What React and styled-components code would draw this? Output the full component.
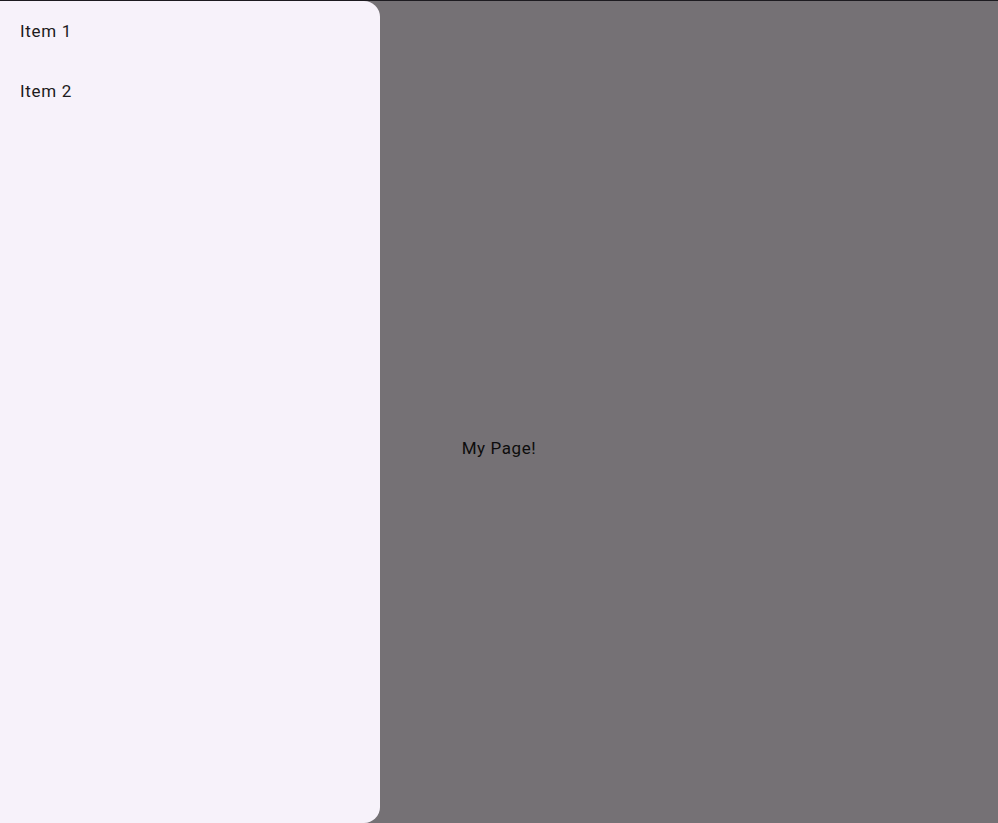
import React from "react";
import styled, { createGlobalStyle } from "styled-components";

const Global = createGlobalStyle`
  html, body { margin: 0; padding: 0; height: 100%; }
  body { font-family: Roboto, "Noto Sans", sans-serif; background: #fef7ff; }
  #root { height: 100%; }
`;

const Screen = styled.div`
  position: relative;
  width: 100%;
  height: 100vh;
  overflow: hidden;
  border-top: 1px solid #1d1b20;
  box-sizing: border-box;
  background: #fef7ff;
`;

const Body = styled.main`
  height: 100%;
  box-sizing: border-box;
  padding-top: 71px;
  display: flex;
  align-items: center;
  justify-content: center;
`;

const PageText = styled.span`
  font-size: 17px;
  line-height: 24px;
  letter-spacing: 0.6px;
  color: #1d1b20;
`;

const Scrim = styled.div`
  position: absolute;
  inset: 0;
  background: rgba(0, 0, 0, 0.54);
`;

const Drawer = styled.nav`
  position: absolute;
  top: 0;
  left: 0;
  bottom: 0;
  width: 380px;
  background: #f7f2fa;
  border-radius: 0 16px 16px 0;
  display: flex;
  flex-direction: column;
`;

const Tile = styled.div`
  height: 60px;
  display: flex;
  align-items: center;
  padding: 0 20px;
  font-size: 17px;
  line-height: 24px;
  letter-spacing: 0.7px;
  color: #1d1b20;
`;

export default function App() {
  return (
    <>
      <Global />
      <Screen>
        <Body>
          <PageText>My Page!</PageText>
        </Body>
        <Scrim />
        <Drawer>
          <Tile>Item 1</Tile>
          <Tile>Item 2</Tile>
        </Drawer>
      </Screen>
    </>
  );
}
